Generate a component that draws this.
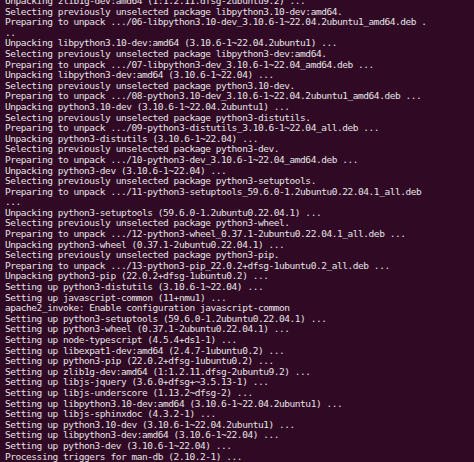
const lines = [
  "Unpacking zlib1g-dev:amd64 (1:1.2.11.dfsg-2ubuntu9.2) ...",
  "Selecting previously unselected package libpython3.10-dev:amd64.",
  "Preparing to unpack .../06-libpython3.10-dev_3.10.6-1~22.04.2ubuntu1_amd64.deb .",
  "..",
  "Unpacking libpython3.10-dev:amd64 (3.10.6-1~22.04.2ubuntu1) ...",
  "Selecting previously unselected package libpython3-dev:amd64.",
  "Preparing to unpack .../07-libpython3-dev_3.10.6-1~22.04_amd64.deb ...",
  "Unpacking libpython3-dev:amd64 (3.10.6-1~22.04) ...",
  "Selecting previously unselected package python3.10-dev.",
  "Preparing to unpack .../08-python3.10-dev_3.10.6-1~22.04.2ubuntu1_amd64.deb ...",
  "Unpacking python3.10-dev (3.10.6-1~22.04.2ubuntu1) ...",
  "Selecting previously unselected package python3-distutils.",
  "Preparing to unpack .../09-python3-distutils_3.10.6-1~22.04_all.deb ...",
  "Unpacking python3-distutils (3.10.6-1~22.04) ...",
  "Selecting previously unselected package python3-dev.",
  "Preparing to unpack .../10-python3-dev_3.10.6-1~22.04_amd64.deb ...",
  "Unpacking python3-dev (3.10.6-1~22.04) ...",
  "Selecting previously unselected package python3-setuptools.",
  "Preparing to unpack .../11-python3-setuptools_59.6.0-1.2ubuntu0.22.04.1_all.deb",
  "...",
  "Unpacking python3-setuptools (59.6.0-1.2ubuntu0.22.04.1) ...",
  "Selecting previously unselected package python3-wheel.",
  "Preparing to unpack .../12-python3-wheel_0.37.1-2ubuntu0.22.04.1_all.deb ...",
  "Unpacking python3-wheel (0.37.1-2ubuntu0.22.04.1) ...",
  "Selecting previously unselected package python3-pip.",
  "Preparing to unpack .../13-python3-pip_22.0.2+dfsg-1ubuntu0.2_all.deb ...",
  "Unpacking python3-pip (22.0.2+dfsg-1ubuntu0.2) ...",
  "Setting up python3-distutils (3.10.6-1~22.04) ...",
  "Setting up javascript-common (11+nmu1) ...",
  "apache2_invoke: Enable configuration javascript-common",
  "Setting up python3-setuptools (59.6.0-1.2ubuntu0.22.04.1) ...",
  "Setting up python3-wheel (0.37.1-2ubuntu0.22.04.1) ...",
  "Setting up node-typescript (4.5.4+ds1-1) ...",
  "Setting up libexpat1-dev:amd64 (2.4.7-1ubuntu0.2) ...",
  "Setting up python3-pip (22.0.2+dfsg-1ubuntu0.2) ...",
  "Setting up zlib1g-dev:amd64 (1:1.2.11.dfsg-2ubuntu9.2) ...",
  "Setting up libjs-jquery (3.6.0+dfsg+~3.5.13-1) ...",
  "Setting up libjs-underscore (1.13.2~dfsg-2) ...",
  "Setting up libpython3.10-dev:amd64 (3.10.6-1~22.04.2ubuntu1) ...",
  "Setting up libjs-sphinxdoc (4.3.2-1) ...",
  "Setting up python3.10-dev (3.10.6-1~22.04.2ubuntu1) ...",
  "Setting up libpython3-dev:amd64 (3.10.6-1~22.04) ...",
  "Setting up python3-dev (3.10.6-1~22.04) ...",
  "Processing triggers for man-db (2.10.2-1) ...",
];

const App = () => {
  return (
    <div className="w-[474px] h-[462px] overflow-hidden bg-[#300a24]">
      <div className="-mt-[4px] pl-[5px] font-['DejaVu_Sans_Mono',monospace] text-[9.5px] leading-[10.6px] tracking-[-0.45px] text-[#e6e2e4] whitespace-pre">
        {lines.map((l, i) => (
          <div key={i}>{l}</div>
        ))}
      </div>
    </div>
  );
};

export default App;
